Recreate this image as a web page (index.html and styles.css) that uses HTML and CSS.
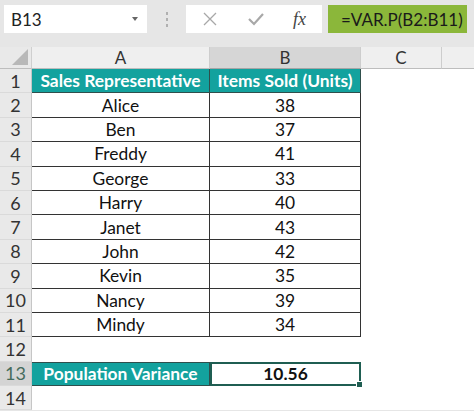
FILE: index.html
```html
<!DOCTYPE html>
<html lang="en">
<head>
    <meta charset="UTF-8">
    <title>VAR.P Example</title>
    <link rel="stylesheet" href="styles.css">
</head>
<body>
    <div class="toolbar">
        <div class="name-box">
            <span>B13</span>
            <span class="caret"></span>
        </div>
        <div class="grip">
            <span></span><span></span><span></span>
        </div>
        <div class="fx-box">
            <svg class="icon" width="14" height="14" viewBox="0 0 14 14">
                <path d="M1 1 L13 13 M13 1 L1 13" stroke="#a8a8a8" stroke-width="1.3" fill="none"/>
            </svg>
            <svg class="icon" width="16" height="14" viewBox="0 0 16 14">
                <path d="M1 7 L6 12 L15 2" stroke="#a8a8a8" stroke-width="2.2" fill="none"/>
            </svg>
            <span class="fx">fx</span>
        </div>
        <div class="formula">=VAR.P(B2:B11)</div>
    </div>

    <div class="sheet">
        <div class="corner"><span class="tri"></span></div>
        <div class="col-head">A</div>
        <div class="col-head selected">B</div>
        <div class="col-head">C</div>
        <div class="col-head last"></div>

        <div class="row-head">1</div>
        <div class="cell head a">Sales Representative</div>
        <div class="cell head b">Items Sold (Units)</div>
        <div class="cell blank"></div><div class="cell blank"></div>

        <div class="row-head">2</div>
        <div class="cell data a">Alice</div><div class="cell data b">38</div>
        <div class="cell blank"></div><div class="cell blank"></div>

        <div class="row-head">3</div>
        <div class="cell data a">Ben</div><div class="cell data b">37</div>
        <div class="cell blank"></div><div class="cell blank"></div>

        <div class="row-head">4</div>
        <div class="cell data a">Freddy</div><div class="cell data b">41</div>
        <div class="cell blank"></div><div class="cell blank"></div>

        <div class="row-head">5</div>
        <div class="cell data a">George</div><div class="cell data b">33</div>
        <div class="cell blank"></div><div class="cell blank"></div>

        <div class="row-head">6</div>
        <div class="cell data a">Harry</div><div class="cell data b">40</div>
        <div class="cell blank"></div><div class="cell blank"></div>

        <div class="row-head">7</div>
        <div class="cell data a">Janet</div><div class="cell data b">43</div>
        <div class="cell blank"></div><div class="cell blank"></div>

        <div class="row-head">8</div>
        <div class="cell data a">John</div><div class="cell data b">42</div>
        <div class="cell blank"></div><div class="cell blank"></div>

        <div class="row-head">9</div>
        <div class="cell data a">Kevin</div><div class="cell data b">35</div>
        <div class="cell blank"></div><div class="cell blank"></div>

        <div class="row-head">10</div>
        <div class="cell data a">Nancy</div><div class="cell data b">39</div>
        <div class="cell blank"></div><div class="cell blank"></div>

        <div class="row-head">11</div>
        <div class="cell data a">Mindy</div><div class="cell data b">34</div>
        <div class="cell blank"></div><div class="cell blank"></div>

        <div class="row-head">12</div>
        <div class="cell blank"></div><div class="cell blank"></div>
        <div class="cell blank"></div><div class="cell blank"></div>

        <div class="row-head selected">13</div>
        <div class="cell head a result">Population Variance</div>
        <div class="cell active">10.56<span class="handle"></span></div>
        <div class="cell blank"></div><div class="cell blank"></div>

        <div class="row-head">14</div>
        <div class="cell blank"></div><div class="cell blank"></div>
        <div class="cell blank"></div><div class="cell blank"></div>
    </div>
</body>
</html>
```

FILE: styles.css
```css
body {
    margin: 0;
    width: 474px;
    height: 411px;
    overflow: hidden;
    background-color: #e6e6e6;
    font-family: Lato, "Open Sans", sans-serif;
    color: #111;
}
.toolbar {
    display: flex;
    align-items: center;
    height: 28px;
    padding: 5px 0 0 4px;
}
.name-box {
    width: 143px;
    height: 28px;
    box-sizing: border-box;
    background-color: white;
    display: flex;
    align-items: center;
    justify-content: space-between;
    padding: 0 9px 0 7px;
    font-size: 17px;
    color: #222;
}
.caret {
    width: 0;
    height: 0;
    border-left: 3px solid transparent;
    border-right: 3px solid transparent;
    border-top: 4px solid #666;
}
.grip {
    width: 39px;
    display: flex;
    flex-direction: column;
    align-items: center;
    gap: 3px;
}
.grip span {
    width: 2px;
    height: 3px;
    background-color: #b0b0b0;
}
.fx-box {
    width: 136px;
    height: 28px;
    box-sizing: border-box;
    background-color: white;
    display: flex;
    align-items: center;
    padding: 0 14px 0 17px;
}
.fx-box .icon:first-child {
    margin-right: 31px;
}
.fx-box .icon:nth-child(2) {
    margin-right: 29px;
}
.fx {
    font-family: "Liberation Serif", serif;
    font-style: italic;
    font-size: 18px;
    color: #444;
}
.formula {
    margin-left: 6px;
    width: 139px;
    height: 28px;
    box-sizing: border-box;
    background-color: #8bb73a;
    display: flex;
    align-items: center;
    padding-left: 13px;
    font-size: 17px;
    color: #1a1a1a;
    white-space: nowrap;
}
.sheet {
    margin-top: 14px;
    display: grid;
    grid-template-columns: 32px 178px 151px 81px 1fr;
    grid-template-rows: 22px repeat(14, 24.4px);
    background-color: white;
}
.corner {
    background-color: #e9e9e9;
    border-right: 1px solid #cfcfcf;
    border-bottom: 1px solid #bdbdbd;
    position: relative;
}
.tri {
    position: absolute;
    right: 3px;
    bottom: 3px;
    width: 0;
    height: 0;
    border-left: 16px solid transparent;
    border-bottom: 16px solid #b8b8b8;
}
.col-head {
    background-color: #efefef;
    border-right: 1px solid #cdcdcd;
    border-bottom: 1px solid #bdbdbd;
    display: flex;
    align-items: center;
    justify-content: center;
    font-size: 17px;
    color: #333;
}
.col-head.selected {
    background-color: #d6d6d6;
    border-bottom-color: #a6a6a6;
}
.col-head.last {
    border-right: none;
}
.row-head {
    background-color: #e9e9e9;
    border-right: 1px solid #c6c6c6;
    border-bottom: 1px solid #dadada;
    display: flex;
    align-items: center;
    justify-content: center;
    font-size: 18px;
    color: #333;
}
.row-head.selected {
    background-color: #d4d4d4;
    color: #446b5c;
}
.cell {
    display: flex;
    align-items: center;
    justify-content: center;
    font-size: 17.4px;
    white-space: nowrap;
    box-sizing: border-box;
}
.head {
    background-color: #13a29e;
    color: white;
    font-weight: bold;
    border-bottom: 1px solid #2f4f4c;
    border-right: 1px solid #2f4f4c;
}
.data {
    border-bottom: 1px solid #333;
    border-right: 1px solid #333;
}
.result {
    border-top: 1px solid #2f4f4c;
}
.active {
    position: relative;
    border: 2px solid #1f5e52;
    font-weight: bold;
    color: #111;
}
.handle {
    position: absolute;
    right: -4px;
    bottom: -4px;
    width: 5px;
    height: 5px;
    background-color: #1f5e52;
    border: 1px solid white;
}
```
